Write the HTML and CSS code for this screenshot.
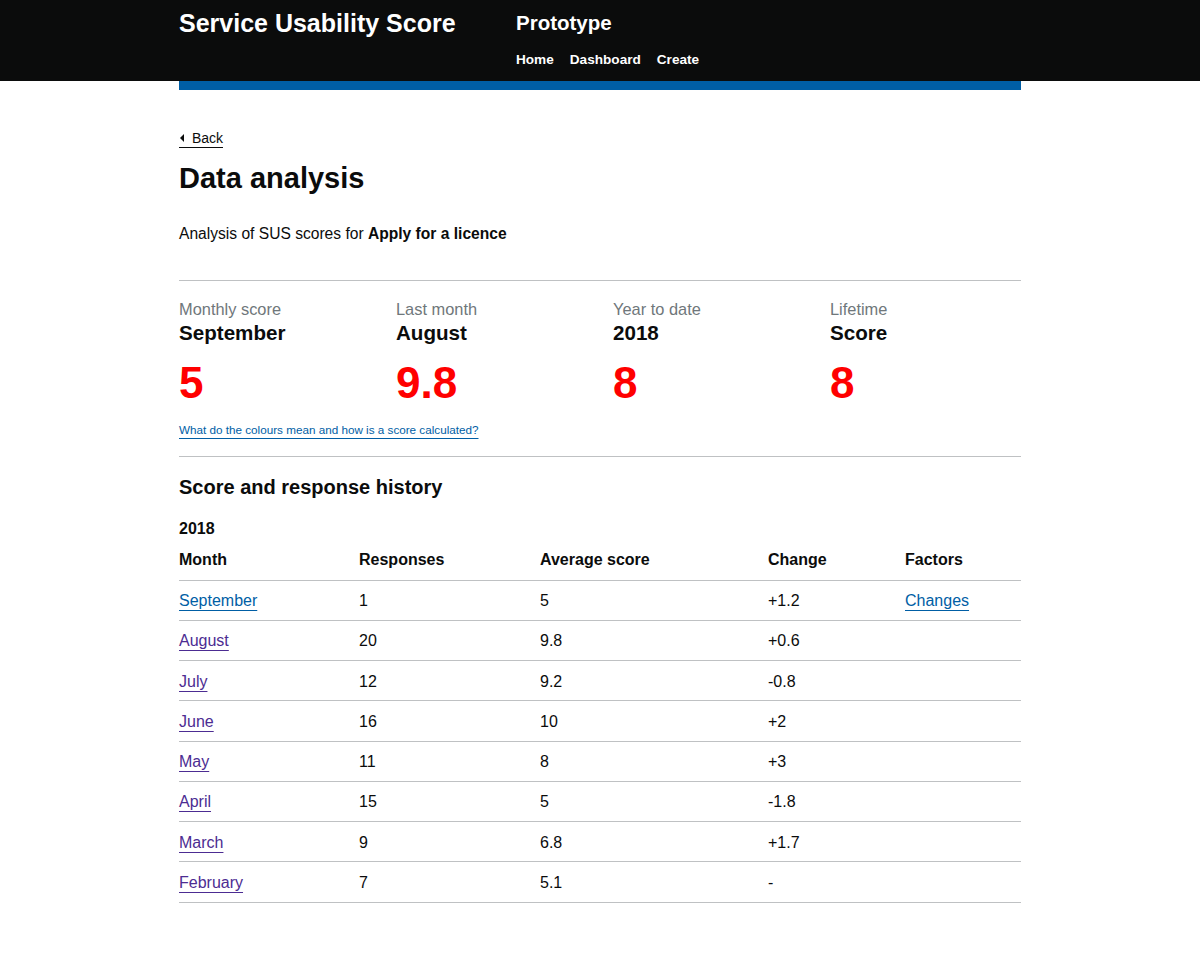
FILE: index.html
```html
<!DOCTYPE html>
<html lang="en">

<head>
  <meta charset="UTF-8" />
  <title>Data analysis - Service Usability Score</title>
  <link rel="stylesheet" href="styles.css">
</head>

<body>

  <header class="header">
    <div class="container header-inner">
      <a href="#" class="header-logo">Service Usability Score</a>
      <div class="header-content">
        <a href="#" class="header-service">Prototype</a>
        <nav class="header-nav">
          <a href="#">Home</a>
          <a href="#">Dashboard</a>
          <a href="#">Create</a>
        </nav>
      </div>
    </div>
  </header>
  <div class="container">
    <div class="header-bar"></div>
  </div>

  <main class="container main">
    <a href="#" class="back-link">Back</a>

    <h1 class="heading-l">Data analysis</h1>
    <p class="body">Analysis of SUS scores for <strong>Apply for a licence</strong></p>

    <hr class="rule" />

    <div class="scores">
      <div class="score">
        <span class="score-label">Monthly score</span>
        <span class="score-period">September</span>
        <span class="score-value">5</span>
      </div>
      <div class="score">
        <span class="score-label">Last month</span>
        <span class="score-period">August</span>
        <span class="score-value">9.8</span>
      </div>
      <div class="score">
        <span class="score-label">Year to date</span>
        <span class="score-period">2018</span>
        <span class="score-value">8</span>
      </div>
      <div class="score">
        <span class="score-label">Lifetime</span>
        <span class="score-period">Score</span>
        <span class="score-value">8</span>
      </div>
    </div>
    <a href="#" class="small-link">What do the colours mean and how is a score calculated?</a>

    <hr class="rule rule-history" />

    <h2 class="heading-m">Score and response history</h2>

    <table class="table">
      <caption>2018</caption>
      <colgroup>
        <col style="width: 180px">
        <col style="width: 181px">
        <col style="width: 228px">
        <col style="width: 137px">
        <col>
      </colgroup>
      <thead>
        <tr>
          <th>Month</th>
          <th>Responses</th>
          <th>Average score</th>
          <th>Change</th>
          <th>Factors</th>
        </tr>
      </thead>
      <tbody>
        <tr>
          <td><a href="#">September</a></td>
          <td>1</td>
          <td>5</td>
          <td>+1.2</td>
          <td><a href="#">Changes</a></td>
        </tr>
        <tr>
          <td><a href="#" class="visited">August</a></td>
          <td>20</td>
          <td>9.8</td>
          <td>+0.6</td>
          <td></td>
        </tr>
        <tr>
          <td><a href="#" class="visited">July</a></td>
          <td>12</td>
          <td>9.2</td>
          <td>-0.8</td>
          <td></td>
        </tr>
        <tr>
          <td><a href="#" class="visited">June</a></td>
          <td>16</td>
          <td>10</td>
          <td>+2</td>
          <td></td>
        </tr>
        <tr>
          <td><a href="#" class="visited">May</a></td>
          <td>11</td>
          <td>8</td>
          <td>+3</td>
          <td></td>
        </tr>
        <tr>
          <td><a href="#" class="visited">April</a></td>
          <td>15</td>
          <td>5</td>
          <td>-1.8</td>
          <td></td>
        </tr>
        <tr>
          <td><a href="#" class="visited">March</a></td>
          <td>9</td>
          <td>6.8</td>
          <td>+1.7</td>
          <td></td>
        </tr>
        <tr>
          <td><a href="#" class="visited">February</a></td>
          <td>7</td>
          <td>5.1</td>
          <td>-</td>
          <td></td>
        </tr>
      </tbody>
    </table>
  </main>

</body>

</html>
```

FILE: styles.css
```css
body {
  margin: 0;
  font-family: "Liberation Sans", Arial, sans-serif;
  color: #0b0c0c;
  background: #fff;
}

a {
  color: #005ea5;
  text-decoration: underline;
  text-decoration-thickness: 1px;
  text-underline-offset: 4px;
}

a.visited {
  color: #4c2c92;
}

.container {
  width: 842px;
  margin: 0 auto;
}

/* header */

.header {
  background: #0b0c0c;
  height: 81px;
}

.header-inner {
  display: flex;
  align-items: flex-start;
  padding-top: 8px;
}

.header-logo {
  width: 337px;
  color: #fff;
  font-size: 25px;
  line-height: 30px;
  font-weight: bold;
  text-decoration: none;
}

.header-content {
  padding-top: 3px;
}

.header-service {
  display: block;
  color: #fff;
  font-size: 20.5px;
  line-height: 24px;
  font-weight: bold;
  text-decoration: none;
}

.header-nav {
  display: flex;
  gap: 16px;
  margin-top: 17px;
}

.header-nav a {
  color: #fff;
  font-size: 13.6px;
  line-height: 16px;
  font-weight: bold;
  text-decoration: none;
}

.header-bar {
  height: 9px;
  background: #005ea5;
}

/* page */

.main {
  padding-top: 39px;
  padding-bottom: 40px;
}

.back-link {
  display: inline-block;
  font-size: 14px;
  line-height: 18px;
  color: #0b0c0c;
  text-decoration: none;
  border-bottom: 1px solid #0b0c0c;
}

.back-link::before {
  content: "";
  display: inline-block;
  margin: 0 8px 1px 1px;
  border-style: solid;
  border-width: 4px 4px 4px 0;
  border-color: transparent #0b0c0c transparent transparent;
}

.heading-l {
  margin: 12px 0 0;
  font-size: 29px;
  line-height: 36px;
  font-weight: bold;
}

.body {
  margin: 28px 0 0;
  font-size: 15.6px;
  line-height: 20px;
}

.rule {
  margin: 36px 0 0;
  border: 0;
  border-top: 1px solid #bfc1c3;
}

.scores {
  display: grid;
  grid-template-columns: 217px 217px 217px auto;
  margin-top: 18px;
}

.score span {
  display: block;
}

.score-label {
  font-size: 16.4px;
  line-height: 20px;
  color: #6f777b;
}

.score-period {
  margin-top: 2px;
  font-size: 20.6px;
  line-height: 24px;
  font-weight: bold;
}

.score-value {
  margin-top: 13px;
  font-size: 44px;
  line-height: 50px;
  font-weight: bold;
  color: #ff0000;
}

.small-link {
  display: inline-block;
  margin-top: 14px;
  font-size: 11.7px;
  line-height: 16px;
}

.rule-history {
  margin-top: 18px;
}

.heading-m {
  margin: 18px 0 0;
  font-size: 20px;
  line-height: 24px;
  font-weight: bold;
}

/* history table */

.table {
  width: 842px;
  margin-top: 20px;
  border-collapse: collapse;
  table-layout: fixed;
  font-size: 16px;
  line-height: 20px;
}

.table caption {
  text-align: left;
  font-weight: bold;
}

.table th,
.table td {
  padding: 10.5px 0 8.75px;
  text-align: left;
  border-bottom: 1px solid #bfc1c3;
}

.table th {
  padding: 11px 0 9.5px;
  font-weight: bold;
}
```
